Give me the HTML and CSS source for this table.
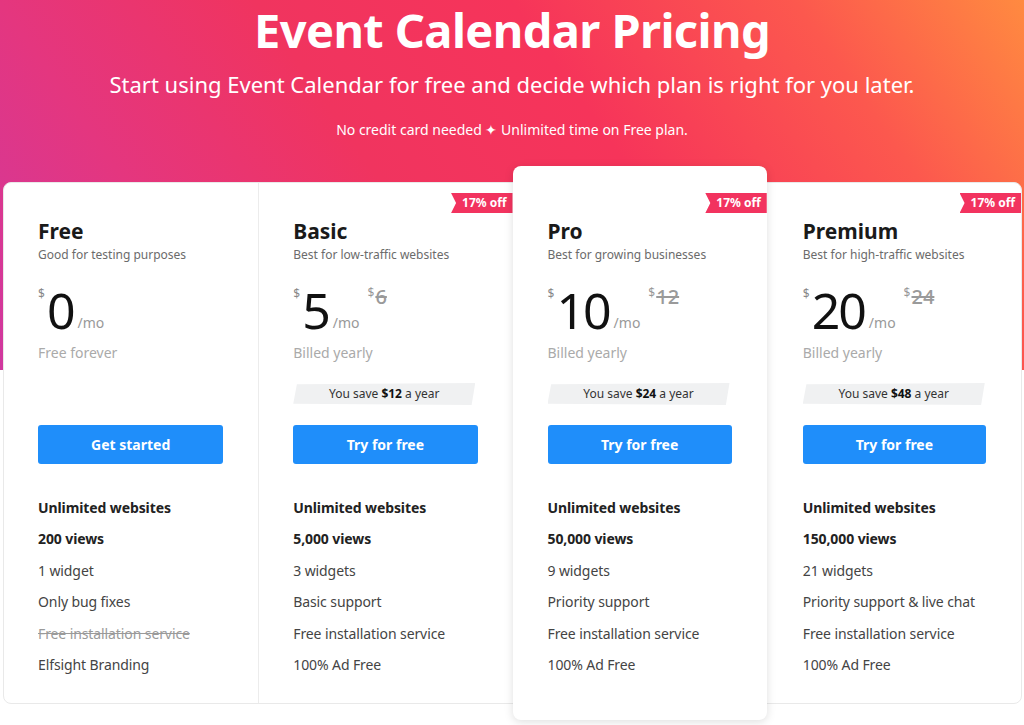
FILE: index.html
```html
<!DOCTYPE html>
<html lang="en">
<head>
<meta charset="utf-8">
<title>Event Calendar Pricing</title>
<link rel="stylesheet" href="styles.css">
</head>
<body>
<header class="hero">
  <h1 class="hero-title">Event Calendar Pricing</h1>
  <p class="hero-sub">Start using Event Calendar for free and decide which plan is right for you later.</p>
  <p class="hero-note">No credit card needed ✦ Unlimited time on Free plan.</p>
</header>

<main class="plans">
  <section class="plan">
    <h2 class="plan-name">Free</h2>
    <p class="plan-desc">Good for testing purposes</p>
    <div class="price">
      <span class="cur">$</span><span class="amount">0</span><span class="per">/mo</span>
    </div>
    <p class="billing">Free forever</p>
    <div class="save save-empty"></div>
    <a class="btn">Get started</a>
    <ul class="features">
      <li class="strong">Unlimited websites</li>
      <li class="strong">200 views</li>
      <li>1 widget</li>
      <li>Only bug fixes</li>
      <li class="off">Free installation service</li>
      <li>Elfsight Branding</li>
    </ul>
  </section>

  <section class="plan">
    <span class="badge">17% off</span>
    <h2 class="plan-name">Basic</h2>
    <p class="plan-desc">Best for low-traffic websites</p>
    <div class="price">
      <span class="cur">$</span><span class="amount">5</span><span class="per">/mo</span>
      <span class="old"><span class="old-cur">$</span><s class="old-val">6</s></span>
    </div>
    <p class="billing">Billed yearly</p>
    <div class="save"><span>You save <b>$12</b> a year</span></div>
    <a class="btn">Try for free</a>
    <ul class="features">
      <li class="strong">Unlimited websites</li>
      <li class="strong">5,000 views</li>
      <li>3 widgets</li>
      <li>Basic support</li>
      <li>Free installation service</li>
      <li>100% Ad Free</li>
    </ul>
  </section>

  <section class="plan plan-pro">
    <span class="badge">17% off</span>
    <h2 class="plan-name">Pro</h2>
    <p class="plan-desc">Best for growing businesses</p>
    <div class="price">
      <span class="cur">$</span><span class="amount">10</span><span class="per">/mo</span>
      <span class="old"><span class="old-cur">$</span><s class="old-val">12</s></span>
    </div>
    <p class="billing">Billed yearly</p>
    <div class="save"><span>You save <b>$24</b> a year</span></div>
    <a class="btn">Try for free</a>
    <ul class="features">
      <li class="strong">Unlimited websites</li>
      <li class="strong">50,000 views</li>
      <li>9 widgets</li>
      <li>Priority support</li>
      <li>Free installation service</li>
      <li>100% Ad Free</li>
    </ul>
  </section>

  <section class="plan">
    <span class="badge">17% off</span>
    <h2 class="plan-name">Premium</h2>
    <p class="plan-desc">Best for high-traffic websites</p>
    <div class="price">
      <span class="cur">$</span><span class="amount">20</span><span class="per">/mo</span>
      <span class="old"><span class="old-cur">$</span><s class="old-val">24</s></span>
    </div>
    <p class="billing">Billed yearly</p>
    <div class="save"><span>You save <b>$48</b> a year</span></div>
    <a class="btn">Try for free</a>
    <ul class="features">
      <li class="strong">Unlimited websites</li>
      <li class="strong">150,000 views</li>
      <li>21 widgets</li>
      <li>Priority support &amp; live chat</li>
      <li>Free installation service</li>
      <li>100% Ad Free</li>
    </ul>
  </section>
</main>
</body>
</html>
```

FILE: styles.css
```css
* { box-sizing: border-box; }

html, body {
  margin: 0;
  padding: 0;
}

body {
  font-family: "Noto Sans", "Open Sans", sans-serif;
  color: #222;
  background-color: #fff;
  background-image: linear-gradient(55deg, #d0389f 0%, #e4367f 20%, #f0345f 40%, #f6345a 60%, #fc584e 82%, #ff8a40 100%);
  background-repeat: no-repeat;
  background-size: 100% 370px;
  width: 1024px;
  height: 725px;
  overflow: hidden;
}

.hero {
  text-align: center;
  color: #fff;
  padding-top: 1px;
}

.hero-title {
  margin: 0;
  font-size: 47px;
  line-height: 58px;
  font-weight: 700;
  letter-spacing: -0.6px;
}

.hero-sub {
  margin: 10px 0 0;
  font-size: 22px;
  line-height: 30px;
}

.hero-note {
  margin: 21px 0 0;
  font-size: 14px;
  line-height: 20px;
}

.plans {
  margin: 42px 2px 0 3px;
  display: grid;
  grid-template-columns: repeat(4, 1fr);
  background: #fff;
  border: 1px solid #e9e9e9;
  border-radius: 8px;
  height: 522px;
}

.plan {
  position: relative;
  padding: 34px 35px 0 34px;
  border-left: 1px solid #ececec;
}

.plan:first-child {
  border-left: none;
  padding: 34px 35px 0 34px;
}

.plan-pro {
  margin: -17px 0 -17px;
  padding: 51px 35px 0 35px;
  background: #fff;
  border: none;
  border-radius: 8px;
  box-shadow: 0 2px 10px rgba(0, 0, 0, 0.13);
  z-index: 2;
}

.plan-pro + .plan {
  border-left: none;
  padding-left: 36px;
}

.badge {
  position: absolute;
  top: 10px;
  right: 0;
  height: 20px;
  padding: 0 6px 0 11px;
  background: #f2335f;
  color: #fff;
  font-size: 12px;
  font-weight: 700;
  line-height: 20px;
  clip-path: polygon(0 0, 100% 0, 100% 100%, 0 100%, 5px 50%);
}

.plan-pro .badge { top: 27px; }

.plan-name {
  margin: 0;
  font-size: 21px;
  line-height: 28px;
  font-weight: 700;
  color: #1a1a1a;
}

.plan-desc {
  margin: 1px 0 0;
  font-size: 12px;
  line-height: 18px;
  color: #6b6b6b;
}

.price {
  margin-top: 22px;
  display: flex;
  align-items: flex-start;
  height: 48px;
}

.cur {
  font-size: 12px;
  line-height: 14px;
  color: #888;
  margin-top: 1px;
  margin-right: 2px;
}

.amount {
  font-size: 50px;
  line-height: 48px;
  font-weight: 400;
  color: #111;
  letter-spacing: -2px;
}

.per {
  align-self: flex-end;
  font-size: 14px;
  line-height: 18px;
  color: #999;
  margin-left: 4px;
  margin-bottom: 2px;
}

.old {
  display: flex;
  align-items: flex-start;
  margin-left: 8px;
  color: #999;
}

.old-cur {
  font-size: 12px;
  line-height: 14px;
}

.old-val {
  font-size: 20px;
  line-height: 22px;
  font-weight: 500;
  color: #9a9a9a;
  text-decoration: line-through;
  text-decoration-thickness: 1.5px;
  margin-left: 1px;
  padding-right: 3px;
}

.billing {
  margin: 9px 0 0;
  font-size: 14px;
  line-height: 20px;
  color: #aaa;
}

.save {
  margin-top: 20px;
  height: 22px;
  width: 182px;
  font-size: 12px;
  line-height: 22px;
  text-align: center;
  color: #333;
  background: #f0f1f2;
  clip-path: polygon(2% 6%, 100% 0, 98% 100%, 0 94%);
}

.save-empty { background: transparent; }

.save b { font-weight: 700; color: #111; }

.btn {
  display: block;
  margin-top: 20px;
  height: 39px;
  line-height: 39px;
  background: #1f8efa;
  border-radius: 3px;
  color: #fff;
  text-align: center;
  font-size: 14px;
  font-weight: 700;
}

.features {
  list-style: none;
  margin: 28px 0 0;
  padding: 0;
}

.features li {
  font-size: 14px;
  line-height: 31.4px;
  color: #444;
  letter-spacing: -0.1px;
  white-space: nowrap;
}

.features li.strong {
  font-weight: 700;
  color: #222;
}

.features li.off {
  color: #9a9a9a;
  text-decoration: line-through;
}
```
